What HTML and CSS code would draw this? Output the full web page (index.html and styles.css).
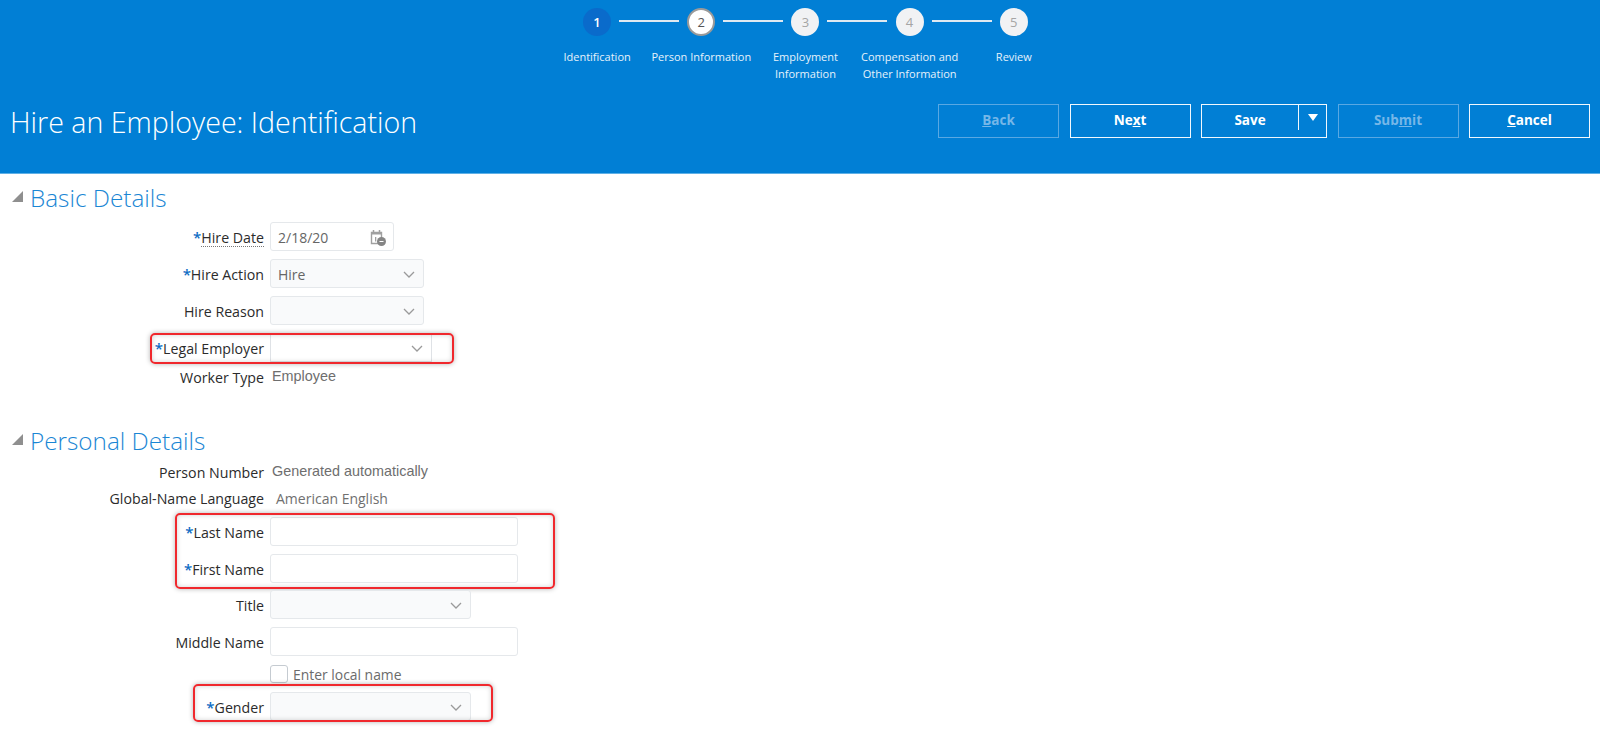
FILE: index.html
```html
<!DOCTYPE html>
<html lang="en">
<head>
<meta charset="utf-8">
<title>Hire an Employee: Identification</title>
<link rel="stylesheet" href="styles.css">
</head>
<body>
<header class="banner">
  <div class="train">
    <div class="dots">
      <span class="dot dot-current">1</span><i class="link"></i>
      <span class="dot dot-next">2</span><i class="link"></i>
      <span class="dot">3</span><i class="link"></i>
      <span class="dot">4</span><i class="link"></i>
      <span class="dot">5</span>
    </div>
    <div class="stops">
      <span>Identification</span>
      <span>Person Information</span>
      <span>Employment Information</span>
      <span>Compensation and Other Information</span>
      <span>Review</span>
    </div>
  </div>
  <div class="titlebar">
    <h1>Hire an Employee: Identification</h1>
    <div class="actions">
      <button class="btn btn-off"><u>B</u>ack</button>
      <button class="btn">Ne<u>x</u>t</button>
      <div class="btn btn-split"><span class="split-main">Save</span><span class="split-arrow"></span></div>
      <button class="btn btn-off">Sub<u>m</u>it</button>
      <button class="btn"><u>C</u>ancel</button>
    </div>
  </div>
</header>
<main>
  <h2 class="section section-basic">Basic Details</h2>
  <div class="row">
    <label class="lbl"><b>*</b><span class="dotted">Hire Date</span></label>
    <div class="field f-date">2/18/20
      <svg class="cal" viewBox="0 0 18 18" width="18" height="18"><path d="M2.500 3.500h10v11h-10z" fill="none" stroke="#a0a0a0" stroke-width="1.400"/><path d="M2 3h11v2.500H2z" fill="#a0a0a0"/><path d="M4.500 1v3M10.500 1v3" stroke="#a0a0a0" stroke-width="1.500"/><path d="M6 8h1.300v4.500H6z" fill="#a0a0a0"/><circle cx="12.500" cy="12.500" r="4.500" fill="#858585"/><path d="M10.500 12.500h4" stroke="#fff" stroke-width="1"/></svg>
    </div>
  </div>
  <div class="row">
    <label class="lbl"><b>*</b>Hire Action</label>
    <div class="field f-sel f-short">Hire<svg class="chev" viewBox="0 0 12 7" width="12" height="7"><path d="M1 1l5 5 5-5" fill="none" stroke="#9a9a9a" stroke-width="1.300"/></svg></div>
  </div>
  <div class="row">
    <label class="lbl">Hire Reason</label>
    <div class="field f-sel f-short"><svg class="chev" viewBox="0 0 12 7" width="12" height="7"><path d="M1 1l5 5 5-5" fill="none" stroke="#9a9a9a" stroke-width="1.300"/></svg></div>
  </div>
  <div class="row">
    <label class="lbl"><b>*</b>Legal Employer</label>
    <div class="field f-legal"><svg class="chev" viewBox="0 0 12 7" width="12" height="7"><path d="M1 1l5 5 5-5" fill="none" stroke="#9a9a9a" stroke-width="1.300"/></svg></div>
    <span class="mark mark-legal"></span>
  </div>
  <div class="row row-read row-worker">
    <label class="lbl">Worker Type</label>
    <span class="val val-arial">Employee</span>
  </div>

  <h2 class="section section-personal">Personal Details</h2>
  <div class="row row-read">
    <label class="lbl">Person Number</label>
    <span class="val val-arial">Generated automatically</span>
  </div>
  <div class="row row-read row-lang">
    <label class="lbl">Global-Name Language</label>
    <span class="val val-lang">American English</span>
  </div>
  <div class="row">
    <label class="lbl"><b>*</b>Last Name</label>
    <div class="field f-long"></div>
    <span class="mark mark-names"></span>
  </div>
  <div class="row row-first">
    <label class="lbl"><b>*</b>First Name</label>
    <div class="field f-long"></div>
  </div>
  <div class="row">
    <label class="lbl">Title</label>
    <div class="field f-sel f-mid"><svg class="chev" viewBox="0 0 12 7" width="12" height="7"><path d="M1 1l5 5 5-5" fill="none" stroke="#9a9a9a" stroke-width="1.300"/></svg></div>
  </div>
  <div class="row">
    <label class="lbl">Middle Name</label>
    <div class="field f-long"></div>
  </div>
  <div class="row row-check">
    <span class="lbl"></span>
    <span class="box"></span><span class="check-text">Enter local name</span>
  </div>
  <div class="row">
    <label class="lbl"><b>*</b>Gender</label>
    <div class="field f-sel f-mid"><svg class="chev" viewBox="0 0 12 7" width="12" height="7"><path d="M1 1l5 5 5-5" fill="none" stroke="#9a9a9a" stroke-width="1.300"/></svg></div>
    <span class="mark mark-gender"></span>
  </div>
</main>
</body>
</html>
```
FILE: styles.css
```css
* { box-sizing: border-box; }
html, body { margin: 0; height: 729px; overflow: hidden; background: #fff; }
body { font-family: "Open Sans", "Liberation Sans", sans-serif; font-size: 14.2px; color: #2b2b2b; }

.banner { height: 174px; background: #017fd5; border-bottom: 1px solid #5fb0e6; color: #fff; }
.train { padding: 8px 0 0 545px; height: 99px; }
.dots { display: flex; align-items: center; padding-left: 38px; }
.dot { width: 28px; height: 28px; border-radius: 50%; background: #f1f2f4; color: #a5a5a5; font-size: 13px; display: flex; align-items: center; justify-content: center; flex: none; }
.dot-current { background: #0a6bcb; color: #fff; font-weight: 600; }
.dot-next { background: #fff; color: #555; border: 2px solid #9a9a9a; }
.link { width: 60px; height: 2px; background: #dfe9f1; margin: 0 8.100px; flex: none; position: relative; top: -1px; }
.stops { display: grid; grid-template-columns: repeat(5, 104.2px); margin-top: 12px; font-size: 11px; line-height: 17px; text-align: center; color: #e6f2fb; }
.titlebar { display: flex; align-items: flex-start; justify-content: space-between; padding: 0 10px; margin-top: 5px; }
h1 { margin: -1px 0 0; font-size: 28.600px; font-weight: 300; line-height: 38px; color: #fff; white-space: nowrap; }
.actions { display: flex; gap: 10.500px; }
.btn { width: 121px; height: 34px; background: transparent; border: 1px solid #f2f8fd; color: #fff; font: 700 13.500px/30px "Open Sans", sans-serif; padding: 0 0 2px; text-align: center; }
.btn-off { border-color: #59a8e3; color: #76b7e8; }
.btn-split { width: 126px; display: flex; padding: 0; }
.split-main { width: 96px; text-align: center; }
.split-arrow { width: 28px; height: 25px; border-left: 1px solid #f2f8fd; position: relative; }
.split-arrow::after { content: ""; position: absolute; left: 9px; top: 9px; border: 5px solid transparent; border-top: 7px solid #fff; border-bottom: 0; }

main { display: block; }
.section { display: flex; align-items: center; margin: 0; font-size: 24.300px; font-weight: 300; line-height: 32px; color: #1a86d4; padding-left: 30px; position: relative; }
.section::before { content: ""; position: absolute; left: 12px; top: 9px; width: 0; height: 0; border-left: 11px solid transparent; border-bottom: 11px solid #8f8f8f; }
.section-basic { margin-top: 8px; margin-bottom: 8px; }
.section-personal { margin-top: 35px; margin-bottom: 2px; }

.row { display: flex; align-items: center; height: 29px; margin-bottom: 8px; position: relative; }
.row-read { height: 26px; margin-bottom: 0; }
.row-worker { margin-top: -6px; }
.row-lang { margin-bottom: 6px; }
.row-first { margin-bottom: 7px; }
.row-check { height: 20px; margin-bottom: 8px; margin-top: 3px; }
.lbl { width: 264px; flex: none; text-align: right; white-space: nowrap; color: #2b2b2b; padding-top: 1px; }
.lbl b { color: #0d6cc4; font-weight: 600; font-size: 15px; }
.dotted { border-bottom: 1px dotted #777; line-height: 16px; display: inline-block; }

.field { margin-left: 6px; height: 29px; background: #fff; border: 1px solid #e5e8eb; border-radius: 3px; position: relative; display: flex; align-items: center; padding: 1px 0 0 7px; color: #666; font-size: 14px; flex: none; }
.f-date { width: 124px; }
.f-sel { background: #f9fafb; }
.f-short { width: 154px; }
.f-mid { width: 201px; }
.f-long { width: 248px; }
.f-legal { width: 162px; border-color: #dfe2e6; border-radius: 0; }
.chev { position: absolute; right: 8px; top: 11px; }
.cal { position: absolute; right: 6px; top: 6px; }

.val { margin-left: 8px; color: #666; }
.val-arial { font-family: "Liberation Sans", Arial, sans-serif; font-size: 14.400px; margin-top: -3px; color: #6e6e6e; }
.val-lang { margin-left: 12px; font-size: 14px; color: #707070; }
.box { width: 18px; height: 18px; margin-left: 6px; border: 1px solid #c5cbd1; border-radius: 3px; background: #fff; flex: none; }
.check-text { margin-left: 5px; color: #6b6b6b; font-size: 13.900px; }

.mark { position: absolute; border: 2px solid #f0282d; border-radius: 5px; box-shadow: 0 0 5px rgba(0,0,0,.3), inset 0 0 5px rgba(0,0,0,.18); pointer-events: none; }
.mark-legal { left: 150px; top: 0; width: 304px; height: 31px; }
.mark-names { left: 175px; top: -4px; width: 380px; height: 76px; }
.mark-gender { left: 193px; top: -8px; width: 300px; height: 38px; }
```
